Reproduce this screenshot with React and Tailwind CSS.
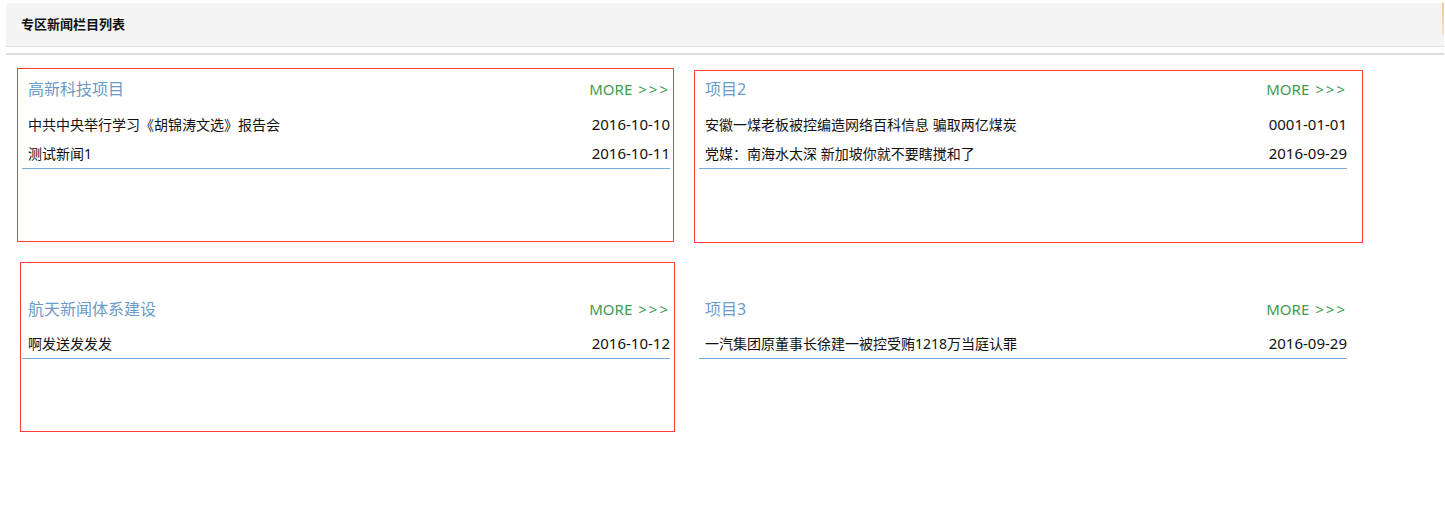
const columns = [
  [
    {
      title: '高新科技项目',
      box: 'ml-[17px] w-[657px] border border-[#ff3b3b] pt-[5px] pb-[72px] pl-[4px] pr-[3px]',
      listMt: 'mt-[6px]',
      items: [
        { name: '中共中央举行学习《胡锦涛文选》报告会', date: '2016-10-10' },
        { name: '测试新闻1', date: '2016-10-11' },
      ],
    },
    {
      title: '项目2',
      box: 'ml-[20px] mt-[2px] w-[669px] border border-[#ff3b3b] pt-[3px] pb-[73px] pl-[4px] pr-[15px]',
      listMt: 'mt-[6px]',
      items: [
        { name: '安徽一煤老板被控编造网络百科信息 骗取两亿煤炭', date: '0001-01-01' },
        { name: '党媒：南海水太深 新加坡你就不要瞎搅和了', date: '2016-09-29' },
      ],
    },
  ],
  [
    {
      title: '航天新闻体系建设',
      box: 'ml-[20px] w-[655px] border border-[#ff3b3b] pt-[31px] pb-[72px] pl-[1px] pr-[4px]',
      listMt: 'mt-[5px]',
      items: [{ name: '啊发送发发发', date: '2016-10-12' }],
    },
    {
      title: '项目3',
      box: 'ml-[19px] w-[669px] border border-transparent pt-[31px] pb-[72px] pl-[4px] pr-[15px]',
      listMt: 'mt-[5px]',
      items: [{ name: '一汽集团原董事长徐建一被控受贿1218万当庭认罪', date: '2016-09-29' }],
    },
  ],
];

function NewsBox({ title, box, listMt, items }) {
  return (
    <div className={box}>
      <div className="flex h-[30px] items-center justify-between pl-[6px]">
        <span className="text-[16px] text-[#6b9bc8]">{title}</span>
        <span className="flex items-center text-[#3f9a52]">
          <span className="text-[15px]">MORE</span>
          <span className="ml-[6px] text-[15px] tracking-[2px]">&gt;&gt;&gt;</span>
        </span>
      </div>
      <ul className={`${listMt} border-b border-[#7aaad6]`}>
        {items.map((it) => (
          <li key={it.name} className="flex h-[29px] items-center justify-between pl-[6px] text-[14px] text-[#111]">
            <span>{it.name}</span>
            <span className="text-[15px]">{it.date}</span>
          </li>
        ))}
      </ul>
    </div>
  );
}

export default function App() {
  return (
    <div
      className="min-h-[510px] bg-white pt-[3px]"
      style={{ fontFamily: '"Noto Sans", "Noto Sans CJK SC", sans-serif' }}
    >
      <div className="relative ml-[6px] mr-[1px] flex h-[44px] items-center rounded-tl-[3px] border-b border-[#dedede] bg-[#f4f4f4] pl-[15px]">
        <span className="text-[13px] font-bold text-[#111]">专区新闻栏目列表</span>
        <span className="absolute right-0 top-0 h-[32px] w-[2px] bg-gradient-to-b from-[#f7c98a] to-[#fbe3c0]" />
      </div>
      <div className="ml-[6px] mr-[1px] mt-[6px] h-[2px] bg-[#dcdcdc]" />

      <div className="mt-[13px] flex items-start">
        {columns[0].map((c) => (
          <NewsBox key={c.title} {...c} />
        ))}
      </div>
      <div className="mt-[19px] flex items-start">
        {columns[1].map((c) => (
          <NewsBox key={c.title} {...c} />
        ))}
      </div>
    </div>
  );
}
